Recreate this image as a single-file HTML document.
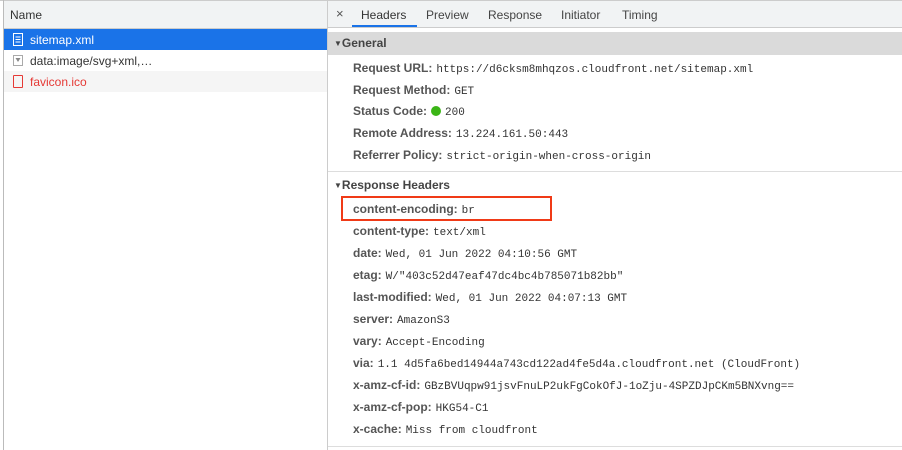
<!DOCTYPE html>
<html><head><style>
*{margin:0;padding:0;box-sizing:border-box}
body{width:902px;height:450px;overflow:hidden;background:#fff;font-family:"Liberation Sans",Arial,sans-serif;font-size:12px;color:#333;position:relative}
.a{position:absolute;white-space:nowrap}
.l{position:absolute;left:353px;font-weight:bold;color:#555;font-size:12px}
.l span{font-family:"Liberation Mono",monospace;font-weight:normal;color:#333;font-size:11px;margin-left:4px}
</style></head><body>
<div class="a" style="left:0;top:0;width:902px;height:1px;background:#ccc"></div>
<div class="a" style="left:3px;top:0;width:1px;height:450px;background:#bbb"></div>
<!-- left header -->
<div class="a" style="left:4px;top:1px;width:323px;height:28px;background:#f1f3f4;border-bottom:1px solid #ccc"></div>
<div class="a" style="left:10px;top:8px;font-size:12px;color:#333">Name</div>
<div class="a" style="left:4px;top:29px;width:323px;height:21px;background:#1a73e8"></div>
<svg class="a" style="left:13px;top:33px" width="10" height="13"><rect x="0.5" y="0.5" width="9" height="12" fill="none" stroke="#fff"/><path d="M2.5 4h5M2.5 6.5h5M2.5 9h5" stroke="#fff"/></svg>
<div class="a" style="left:30px;top:33px;color:#fff">sitemap.xml</div>
<svg class="a" style="left:13px;top:55px" width="10" height="11"><rect x="0.5" y="0.5" width="9" height="10" fill="#fff" stroke="#aaa"/><path d="M2.5 3h5l-2.5 4z" fill="#888"/></svg>
<div class="a" style="left:30px;top:54px;color:#333">data:image/svg+xml,…</div>
<div class="a" style="left:4px;top:71px;width:323px;height:21px;background:#f5f5f5"></div>
<div class="a" style="left:13px;top:75px;width:10px;height:13px;border:1px solid #e53935;border-radius:1px"></div>
<div class="a" style="left:30px;top:75px;color:#e53935">favicon.ico</div>
<div class="a" style="left:327px;top:0;width:1px;height:450px;background:#ccc"></div>
<!-- tabs -->
<div class="a" style="left:328px;top:1px;width:574px;height:27px;background:#f1f3f4;border-bottom:1px solid #ccc"></div>
<div class="a" style="left:336px;top:6px;font-size:13px;color:#555">×</div>
<div class="a" style="left:361px;top:8px;color:#333">Headers</div>
<div class="a" style="left:352px;top:25px;width:65px;height:2px;background:#1a73e8"></div>
<div class="a" style="left:426px;top:8px;color:#444">Preview</div>
<div class="a" style="left:488px;top:8px;color:#444">Response</div>
<div class="a" style="left:561px;top:8px;color:#444">Initiator</div>
<div class="a" style="left:622px;top:8px;color:#444">Timing</div>
<!-- General -->
<div class="a" style="left:328px;top:32px;width:574px;height:23px;background:#dadada"></div>
<div class="a" style="left:334px;top:36px;font-weight:bold;color:#444"><span style="font-size:8px;vertical-align:1px">▼</span>General</div>
<div class="l" style="top:61px">Request URL:<span>https://d6cksm8mhqzos.cloudfront.net/sitemap.xml</span></div>
<div class="l" style="top:83px">Request Method:<span>GET</span></div>
<div class="l" style="top:104px">Status Code:<span style="display:inline-block;width:10px;height:10px;border-radius:50%;background:#3bb516;vertical-align:-1px"></span><span>200</span></div>
<div class="l" style="top:126px">Remote Address:<span>13.224.161.50:443</span></div>
<div class="l" style="top:148px">Referrer Policy:<span>strict-origin-when-cross-origin</span></div>
<div class="a" style="left:328px;top:171px;width:574px;height:1px;background:#ddd"></div>
<div class="a" style="left:334px;top:178px;font-weight:bold;color:#444"><span style="font-size:8px;vertical-align:1px">▼</span>Response Headers</div>
<div class="a" style="left:341px;top:196px;width:211px;height:25px;border:2px solid #f03a17"></div>
<div class="l" style="top:202px">content-encoding:<span>br</span></div>
<div class="l" style="top:224px">content-type:<span>text/xml</span></div>
<div class="l" style="top:246px">date:<span>Wed, 01 Jun 2022 04:10:56 GMT</span></div>
<div class="l" style="top:268px">etag:<span>W/"403c52d47eaf47dc4bc4b785071b82bb"</span></div>
<div class="l" style="top:290px">last-modified:<span>Wed, 01 Jun 2022 04:07:13 GMT</span></div>
<div class="l" style="top:312px">server:<span>AmazonS3</span></div>
<div class="l" style="top:334px">vary:<span>Accept-Encoding</span></div>
<div class="l" style="top:356px">via:<span>1.1 4d5fa6bed14944a743cd122ad4fe5d4a.cloudfront.net (CloudFront)</span></div>
<div class="l" style="top:378px">x-amz-cf-id:<span>GBzBVUqpw91jsvFnuLP2ukFgCokOfJ-1oZju-4SPZDJpCKm5BNXvng==</span></div>
<div class="l" style="top:400px">x-amz-cf-pop:<span>HKG54-C1</span></div>
<div class="l" style="top:422px">x-cache:<span>Miss from cloudfront</span></div>
<div class="a" style="left:328px;top:446px;width:574px;height:1px;background:#ddd"></div>
</body></html>
